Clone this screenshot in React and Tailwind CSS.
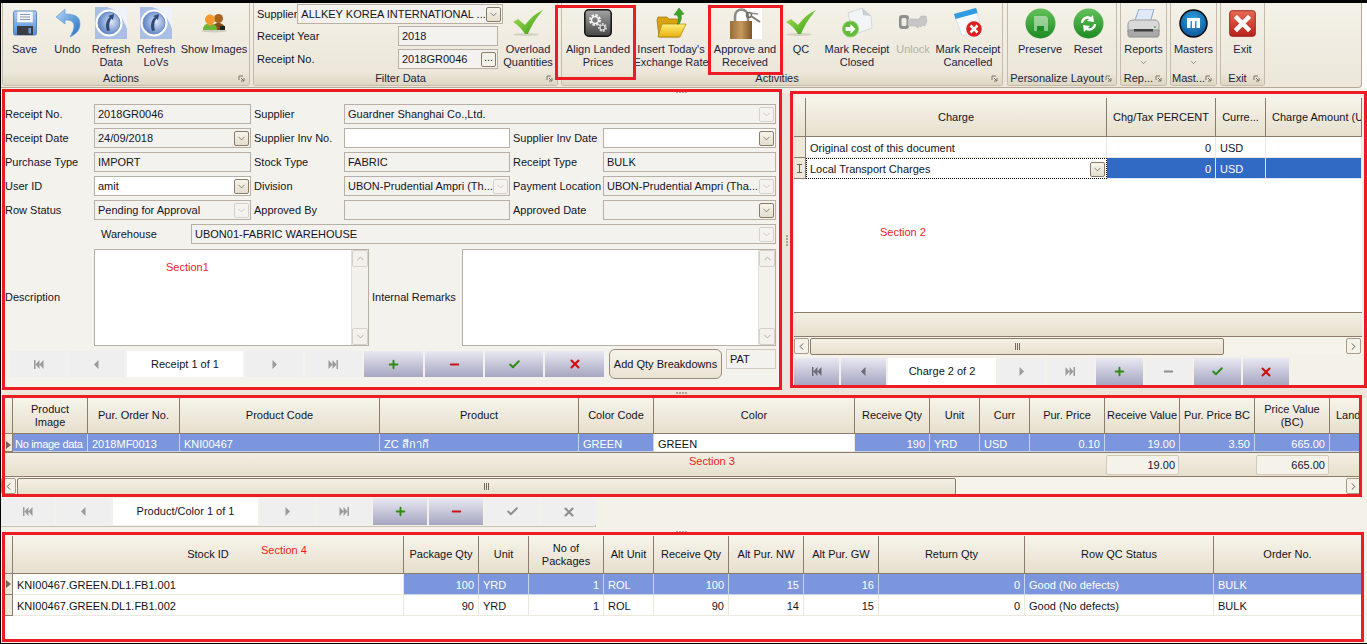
import React from 'react';
import { Plus, Minus, Check, X, ChevronDown, ChevronLeft, ChevronRight, ChevronUp } from 'lucide-react';

// ---------- ribbon icons ----------
const SaveIcon = () => (
  <svg width="26" height="26" viewBox="0 0 26 26">
    <defs>
      <linearGradient id="sv" x1="0" y1="0" x2="0" y2="1"><stop offset="0" stopColor="#a9cdf3" /><stop offset="1" stopColor="#4f8fdb" /></linearGradient>
    </defs>
    <path d="M1.5 2.5a1.5 1.5 0 0 1 1.5-1.5h20a1.5 1.5 0 0 1 1.5 1.5v21a1.5 1.5 0 0 1-1.5 1.5H3a1.5 1.5 0 0 1-1.5-1.5z" fill="url(#sv)" stroke="#5b86b8" />
    <rect x="5" y="1.5" width="16" height="11" fill="#f4f7fb" stroke="#9db6d3" strokeWidth=".5" />
    <path d="M8 4.5h10M8 7h10M8 9.5h10" stroke="#8a98a8" />
    <rect x="5" y="16" width="16" height="9" fill="#3a3d44" />
    <rect x="16.5" y="18" width="2.5" height="5.5" fill="#6c9fd8" />
  </svg>
);

const UndoIcon = () => (
  <svg width="26" height="30" viewBox="0 0 26 30">
    <defs>
      <linearGradient id="ud" x1="0" y1="0" x2="1" y2="1"><stop offset="0" stopColor="#b5d6f5" /><stop offset="1" stopColor="#1f6fc4" /></linearGradient>
    </defs>
    <path d="M10 1 1 9l9 7v-4c5 0 9 1 9 6 0 4-2 7-4 11 6-3 10-7 10-13 0-8-6-10-15-10z" fill="url(#ud)" stroke="#5f97d0" strokeWidth=".6" />
  </svg>
);

const RefreshIcon = ({ id }) => (
  <svg width="32" height="32" viewBox="0 0 32 32">
    <defs>
      <radialGradient id={id} cx=".6" cy=".45" r=".65"><stop offset="0" stopColor="#dfe8f6" /><stop offset="1" stopColor="#4f78bd" /></radialGradient>
    </defs>
    <rect width="32" height="32" fill="#a9bfe3" />
    <path d="M12 0h20v22C28 10 22 3 12 0z" fill="#eef3fb" />
    <circle cx="14" cy="16" r="13.500" fill="#fff" />
    <circle cx="14" cy="16" r="11" fill={`url(#${id})`} stroke="#6d8fcb" />
    <path d="M12 24c-2-5-1-11 3-14l-2-1 6-2-1 6-1.500-1.500c-2 2-3 7-1.500 12z" fill="#2f4a78" />
  </svg>
);

const PeopleIcon = () => (
  <svg width="28" height="20" viewBox="0 0 28 20">
    <ellipse cx="14" cy="18" rx="13" ry="1.500" fill="#d0ccc0" />
    <circle cx="18.500" cy="5.500" r="4.500" fill="#a8631f" />
    <path d="M12 17c0-5 3-7 6.500-7s6.500 2 6.500 7z" fill="#8a4c18" />
    <rect x="20" y="13" width="5" height="4" fill="#222" />
    <circle cx="10" cy="6.500" r="5" fill="#f29a2e" />
    <path d="M3 17c0-5 3-6.500 7-6.500S17 12 17 17z" fill="#6bb536" />
    <path d="M7 11c1 2 5 2 6 0l-1-2H8z" fill="#f29a2e" />
  </svg>
);

const CheckIcon = ({ id }) => (
  <svg width="32" height="28" viewBox="0 0 32 28">
    <defs>
      <linearGradient id={id} x1="0" y1="0" x2="1" y2="1"><stop offset="0" stopColor="#b4e55a" /><stop offset="1" stopColor="#2e9a12" /></linearGradient>
    </defs>
    <ellipse cx="14" cy="25.500" rx="13" ry="1.500" fill="#d5d1c5" />
    <path d="M1 13l5-3 7 6C18 9 24 4 31 1c-5 6-11 14-15 24h-3C10 20 6 16 1 13z" fill={`url(#${id})`} />
  </svg>
);

const GearsIcon = () => (
  <svg width="28" height="28" viewBox="0 0 28 28">
    <defs>
      <linearGradient id="gr" x1="0" y1="0" x2="0" y2="1"><stop offset="0" stopColor="#a4a4a4" /><stop offset="1" stopColor="#454545" /></linearGradient>
    </defs>
    <rect x=".8" y=".8" width="26.400" height="26.400" rx="4" fill="url(#gr)" stroke="#111" strokeWidth="1.500" />
    <circle cx="11" cy="11" r="4.500" fill="none" stroke="#f0f0f0" strokeWidth="3" strokeDasharray="2.200 1.300" />
    <circle cx="11" cy="11" r="3.500" fill="none" stroke="#f0f0f0" strokeWidth="1.500" />
    <circle cx="18.500" cy="18.500" r="3.200" fill="none" stroke="#d4d4d4" strokeWidth="2.500" strokeDasharray="1.800 1" />
    <circle cx="18.500" cy="18.500" r="2.500" fill="none" stroke="#d4d4d4" strokeWidth="1.200" />
  </svg>
);

const FolderIcon = () => (
  <svg width="31" height="30" viewBox="0 0 31 30">
    <defs>
      <linearGradient id="fd" x1="0" y1="0" x2="0" y2="1"><stop offset="0" stopColor="#fff07a" /><stop offset="1" stopColor="#e8b010" /></linearGradient>
    </defs>
    <path d="M1 12l1-3h9l2 2h10v18H3z" fill="#d9a20f" stroke="#9a7508" strokeWidth=".7" />
    <path d="M2 29l4-13h24l-6 13z" fill="url(#fd)" stroke="#a88208" strokeWidth=".7" />
    <path d="M21 16c2-3 2-6 0-9h-3l5-7 5 6-3 1c1 3 0 6-2 9z" fill="#3fa52a" stroke="#2b7d1c" strokeWidth=".5" />
  </svg>
);

const LockIcon = () => (
  <svg width="33" height="31" viewBox="0 0 33 31">
    <rect x="8" y="0" width="25" height="31" fill="#fff" />
    <path d="M6 14V8a6.500 6.500 0 0 1 13 0v6" fill="none" stroke="#8c8c86" strokeWidth="2.500" />
    <defs>
      <linearGradient id="lk" x1="0" y1="0" x2="1" y2="0"><stop offset="0" stopColor="#9a6c36" /><stop offset=".5" stopColor="#c79a5c" /><stop offset="1" stopColor="#7c5428" /></linearGradient>
    </defs>
    <rect x="1" y="13" width="22" height="18" fill="url(#lk)" />
    <circle cx="20" cy="7" r="2.500" fill="none" stroke="#6f6a62" strokeWidth="1.500" />
    <path d="M22 8l9 6" stroke="#807a70" strokeWidth="2" />
    <path d="M21 5l8 1" stroke="#8f8a80" strokeWidth="1.500" />
  </svg>
);

const DocArrowIcon = () => (
  <svg width="31" height="30" viewBox="0 0 31 30">
    <path d="M6 5 20 0l9 8 1 12-19 7z" fill="#f2f4f6" stroke="#d4d8dc" />
    <path d="M20 0l1 7 8 1z" fill="#c9ced4" />
    <circle cx="8.500" cy="21" r="8" fill="#63bb3c" stroke="#93d36f" />
    <path d="M3.500 19h5v-3l5 5-5 5v-3h-5z" fill="#fff" />
  </svg>
);

const KeyIcon = () => (
  <svg width="30" height="22" viewBox="0 0 30 22">
    <rect x="1" y="3" width="10" height="14" rx="3" fill="#8f8f8f" />
    <rect x="3.500" y="6" width="5" height="8" rx="1.500" fill="#efece2" />
    <path d="M10 7h11l2-3h5l1 5-2 5-3-1-1 2-2-1-1 2-3-2-7 0z" fill="#c6c6c6" stroke="#b0b0b0" strokeWidth=".5" />
  </svg>
);

const CancelIcon = () => (
  <svg width="31" height="31" viewBox="0 0 31 31">
    <path d="M1 6 23 0l6 22-20 6z" fill="#f7f9fb" stroke="#d8dce0" />
    <path d="M1 6 23 0l1.500 5L2.500 11z" fill="#2f9be0" />
    <circle cx="21" cy="21" r="8.500" fill="#dd1f1f" stroke="#f0f0f0" strokeWidth="1.500" />
    <path d="M17.500 17.500l7 7m0-7-7 7" stroke="#fff" strokeWidth="2.500" />
  </svg>
);

const GreenDisc = ({ id, children }) => (
  <svg width="31" height="31" viewBox="0 0 31 31">
    <defs>
      <linearGradient id={id} x1="0" y1="0" x2="0" y2="1"><stop offset="0" stopColor="#62c25a" /><stop offset="1" stopColor="#1e8a22" /></linearGradient>
    </defs>
    <circle cx="15.500" cy="15.500" r="15" fill={`url(#${id})`} />
    {children}
  </svg>
);

const PrinterIcon = () => (
  <svg width="33" height="29" viewBox="0 0 33 29">
    <path d="M12 0h15l-4 14H7z" fill="#dfe9f7" stroke="#8da6c8" />
    <path d="M1 15c0-2 2-4 5-4h22c2 0 4 2 4 4v8H1z" fill="#d9d9d9" stroke="#9a9a9a" />
    <path d="M1 21h31v5c0 1-1 2-2 2H3c-1 0-2-1-2-2z" fill="#a9a9a9" stroke="#8b8b8b" />
    <rect x="7" y="20" width="19" height="2.500" fill="#3f3f3f" />
    <circle cx="28" cy="18" r="1" fill="#4caf50" />
  </svg>
);

const MastersIcon = () => (
  <svg width="29" height="29" viewBox="0 0 29 29">
    <defs>
      <radialGradient id="ms" cx=".5" cy=".35" r=".7"><stop offset="0" stopColor="#35a4e0" /><stop offset="1" stopColor="#084f90" /></radialGradient>
    </defs>
    <circle cx="14.500" cy="14.500" r="13.500" fill="url(#ms)" stroke="#0a0a0a" strokeWidth="1.500" />
    <path d="M8 9h13v10h-3.500v-7H16v7h-3v-7h-1.500v7H8z" fill="#fff" />
  </svg>
);

const ExitIcon = () => (
  <svg width="27" height="27" viewBox="0 0 27 27">
    <defs>
      <linearGradient id="ex" x1="0" y1="0" x2="0" y2="1"><stop offset="0" stopColor="#e86a52" /><stop offset="1" stopColor="#b8201a" /></linearGradient>
    </defs>
    <rect x=".7" y=".7" width="25.600" height="25.600" rx="2.500" fill="url(#ex)" stroke="#9a2a20" />
    <path d="M8 8l11 11m0-11L8 19" stroke="#fff" strokeWidth="4.500" strokeLinecap="square" />
  </svg>
);

// ---------- ribbon pieces ----------
const RibbonBtn = ({ icon, lines, w, muted, arrow }) => (
  <div className={`flex flex-col items-center shrink-0 ${w}`}>
    <div className="h-[40px] flex items-center justify-center">{icon}</div>
    <div className={`text-center leading-[13px] whitespace-nowrap ${muted ? 'text-[#b5b1a6]' : 'text-[#1a2340]'}`}>
      {lines.map((l) => <div key={l}>{l}</div>)}
    </div>
    {arrow && <ChevronDown size={9} strokeWidth={1.5} className="text-[#555] mt-[2px]" />}
  </div>
);

const Launcher = () => (
  <svg width="7" height="7" viewBox="0 0 7 7" className="absolute right-[4px] top-[4px]">
    <path d="M1 1h4M1 1v4M3 3l3 3M6 3v3H3" stroke="#77776f" fill="none" />
  </svg>
);

const RibbonGroup = ({ title, w, children }) => (
  <div className={`flex flex-col h-[83px] border-x border-b border-[#c6bbab] rounded-b-[3px] shrink-0 ${w}`}>
    <div className="h-[68px] flex bg-linear-to-b from-[#f4f1e8] to-[#ece7da]">{children}</div>
    <div className="relative h-[14px] pr-[10px] leading-[14px] text-center whitespace-nowrap text-[#1a2340] bg-linear-to-b from-[#eee9db] to-[#ddd6c3]">
      {title}
      <Launcher />
    </div>
  </div>
);

// ---------- form pieces ----------
const ComboArrow = ({ on }) => (
  <span className={`shrink-0 w-[15px] h-[15px] mr-[1px] rounded-[2px] border flex items-center justify-center ${on ? 'border-[#8a7a6a] bg-linear-to-b from-[#f7f4ec] to-[#e4decd] text-[#5a5148]' : 'border-[#d5d1ca] bg-[#f5f3ef] text-[#bdb9b2]'}`}>
    <ChevronDown size={11} strokeWidth={1.5} />
  </span>
);

const Field = ({ value, white, combo, on, className = '' }) => (
  <div className={`h-[20px] flex items-center border border-[#b9afa5] pl-[3px] ${white ? 'bg-white' : 'bg-[#f4f2ee]'} ${className}`}>
    <span className="flex-1 whitespace-nowrap overflow-hidden">{value}</span>
    {combo && <ComboArrow on={on} />}
  </div>
);

const Label = ({ children }) => <div className="h-[20px] leading-[20px] whitespace-nowrap">{children}</div>;

const MemoBox = ({ w }) => (
  <div className={`h-[97px] flex bg-white border border-[#b9afa5] ${w}`}>
    <div className="flex-1" />
    <div className="w-[17px] flex flex-col justify-between bg-[#f3f1ec] border-l border-[#e3dfd7]">
      <span className="h-[17px] flex items-center justify-center border border-[#d5d1ca] rounded-[2px] text-[#a8a49d]"><ChevronUp size={11} /></span>
      <span className="h-[17px] flex items-center justify-center border border-[#d5d1ca] rounded-[2px] text-[#a8a49d]"><ChevronDown size={11} /></span>
    </div>
  </div>
);

// ---------- navigator pieces ----------
const Glyph = ({ type, on }) => {
  const c = on ? '#6a6a74' : '#9a9a9a';
  return (
    <svg width="11" height="9" viewBox="0 0 11 9">
      {type === 'first' && <path d="M1 0h1.500v9H1zM6.500 0v9L2.500 4.500zM10.500 0v9l-4-4.500z" fill={c} />}
      {type === 'prev' && <path d="M7.500 0v9L3 4.500z" fill={c} />}
      {type === 'next' && <path d="M3.500 0v9L8 4.500z" fill={c} />}
      {type === 'last' && <path d="M8.500 0H10v9H8.500zM4.500 0v9l4-4.500zM.500 0v9l4-4.500z" fill={c} />}
    </svg>
  );
};

const NavBtn = ({ w, on, children }) => (
  <div className={`h-full shrink-0 flex items-center justify-center ${w} ${on ? 'bg-linear-to-b from-[#e9e9f2] to-[#a6a6c2]' : 'bg-[#efefef]'}`}>
    {children}
  </div>
);

const NavLabel = ({ w, text }) => (
  <div className={`h-full shrink-0 bg-white flex items-center justify-center whitespace-nowrap ${w}`}>{text}</div>
);

const Add = () => <Plus size={13} strokeWidth={3.5} className="text-[#2f8a10]" />;
const Del = ({ off }) => <Minus size={13} strokeWidth={3.5} className={off ? 'text-[#8e8e8e]' : 'text-[#c81414]'} />;
const Ok = ({ off }) => <Check size={13} strokeWidth={3.5} className={off ? 'text-[#8e8e8e]' : 'text-[#2f8a10]'} />;
const No = ({ off }) => <X size={14} strokeWidth={3.5} className={off ? 'text-[#8e8e8e]' : 'text-[#d01010]'} />;

// ---------- grid pieces ----------
const Head = ({ children, left }) => (
  <div className={`flex items-center leading-[13px] text-center whitespace-nowrap overflow-hidden border-r border-[#8d7b6b] ${left ? 'justify-start pl-[6px]' : 'justify-center'}`}>
    <div>{children}</div>
  </div>
);

const RowHead = ({ children }) => (
  <div className="flex items-center justify-center border-r border-b border-[#8d7b6b] bg-[#ede8da]">{children}</div>
);

const Cell = ({ children, right, sel, focus, white }) => {
  const tone = sel ? 'bg-[#7b96dc] text-white border-[#c9d3ee]' : focus ? 'bg-[#316ac5] text-white border-[#dfe6f5]' : 'bg-white border-[#ece8dc]';
  return (
    <div className={`flex items-center overflow-hidden whitespace-nowrap px-[4px] pt-[2px] border-r border-b ${white ? 'bg-white border-[#ece8dc] text-[#111]' : tone} ${right ? 'justify-end' : ''}`}>
      {children}
    </div>
  );
};

const Pointer = () => (
  <svg width="5" height="8" viewBox="0 0 5 8"><path d="M0 0v8l5-4z" fill="#7a6258" /></svg>
);

const IBeam = () => (
  <svg width="5" height="9" viewBox="0 0 5 9"><path d="M0 .5h5M0 8.500h5M2.500 .5v8" stroke="#6a6258" fill="none" /></svg>
);

const ScrollArrow = ({ right }) => (
  <span className="w-[15px] h-[16px] shrink-0 flex items-center justify-center rounded-[2px] border border-[#a89a8a] bg-[#f4f1e8] text-[#5a5148]">
    {right ? <ChevronRight size={11} /> : <ChevronLeft size={11} />}
  </span>
);

const Scrollbar = ({ thumb, className = '' }) => (
  <div className={`h-[18px] flex items-center gap-[1px] pr-[1px] bg-[#f6f3ea] ${className}`}>
    <ScrollArrow />
    <div className={`h-[17px] shrink-0 flex items-center justify-center rounded-[2px] border border-[#8d7b6b] bg-linear-to-b from-[#f4f0e5] to-[#e7e0ce] ${thumb}`}>
      <span className="w-[5px] h-[7px] border-x border-[#77695c] relative">
        <span className="absolute left-[1px] top-0 w-[1px] h-[7px] bg-[#77695c]" />
      </span>
    </div>
    <div className="flex-1" />
    <ScrollArrow right />
  </div>
);

const Dots = () => (
  <div className="flex gap-[1px]">
    <span className="w-[2px] h-[2px] bg-[#a9a295]" />
    <span className="w-[2px] h-[2px] bg-[#a9a295]" />
    <span className="w-[2px] h-[2px] bg-[#a9a295]" />
    <span className="w-[2px] h-[2px] bg-[#a9a295]" />
  </div>
);

const headBg = 'bg-linear-to-b from-[#f7f4eb] to-[#e6dfcd] border-b border-[#8d7b6b]';
const cols2 = 'grid grid-cols-[12px_301px_109px_50px_96px]';
const cols3 = 'grid grid-cols-[9px_75px_92px_200px_199px_75px_201px_75px_50px_50px_75px_75px_75px_75px_32px]';
const cols4 = 'grid grid-cols-[9px_391px_75px_50px_75px_50px_75px_75px_75px_146px_189px_148px]';

const stockRows = [
  { id: 'KNI00467.GREEN.DL1.FB1.001', pkg: 100, pk: 1, rec: 100, nw: 15, gw: 16, sel: true },
  { id: 'KNI00467.GREEN.DL1.FB1.002', pkg: 90, pk: 1, rec: 90, nw: 14, gw: 15, sel: false },
];

export default function App() {
  return (
    <div
      className="relative w-[1367px] h-[644px] overflow-hidden flex flex-col bg-[#f4f1e9] border-l border-b border-black text-[11px] text-[#14141e]"
      style={{ fontFamily: '"Liberation Sans", "Noto Sans", sans-serif' }}
    >
      <div className="h-[3px] shrink-0 bg-black -ml-px" />

      {/* Ribbon */}
      <div className="h-[85px] shrink-0 bg-white">
        <div className="w-[1361px] h-[85px] flex items-start pl-[1px] border-r border-b border-[#b5aa9a] rounded-br-[4px] bg-linear-to-b from-[#f4f1e8] to-[#ece7da]">
          <RibbonGroup title="Actions" w="w-[248px]">
            <RibbonBtn w="w-[43px]" icon={<SaveIcon />} lines={['Save']} />
            <RibbonBtn w="w-[43px]" icon={<UndoIcon />} lines={['Undo']} />
            <RibbonBtn w="w-[44px]" icon={<RefreshIcon id="r1" />} lines={['Refresh', 'Data']} />
            <RibbonBtn w="w-[46px]" icon={<RefreshIcon id="r2" />} lines={['Refresh', 'LoVs']} />
            <RibbonBtn w="w-[70px]" icon={<PeopleIcon />} lines={['Show Images']} />
          </RibbonGroup>
          <div className="w-[3px]" />
          <RibbonGroup title="Filter Data" w="w-[305px]">
            <div className="w-[244px] shrink-0 pl-[3px] pt-[1px] flex flex-col">
              <div className="flex items-center h-[20px] mb-[1px]">
                <span className="w-[41px]">Supplier</span>
                <Field value="ALLKEY KOREA INTERNATIONAL ..." combo on className="flex-1" />
              </div>
              <div className="flex items-center h-[22px] mb-[1px]">
                <span className="w-[141px]">Receipt Year</span>
                <Field value="2018" className="flex-1" />
              </div>
              <div className="flex items-center h-[22px]">
                <span className="w-[141px]">Receipt No.</span>
                <div className="flex-1 h-[20px] flex items-center border border-[#b9afa5] pl-[3px] bg-[#f4f2ee]">
                  <span className="flex-1">2018GR0046</span>
                  <span className="w-[15px] h-[15px] mr-[1px] rounded-[2px] border border-[#8a7a6a] bg-[#f4f1e8] leading-[9px] text-center">...</span>
                </div>
              </div>
            </div>
            <RibbonBtn w="w-[60px]" icon={<CheckIcon id="c1" />} lines={['Overload', 'Quantities']} />
          </RibbonGroup>
          <div className="w-[3px]" />
          <RibbonGroup title="Activities" w="w-[442px]">
            <RibbonBtn w="w-[72px]" icon={<GearsIcon />} lines={['Align Landed', 'Prices']} />
            <RibbonBtn w="w-[74px]" icon={<FolderIcon />} lines={["Insert Today's", 'Exchange Rate']} />
            <RibbonBtn w="w-[74px]" icon={<LockIcon />} lines={['Approve and', 'Received']} />
            <RibbonBtn w="w-[38px]" icon={<CheckIcon id="c2" />} lines={['QC']} />
            <RibbonBtn w="w-[74px]" icon={<DocArrowIcon />} lines={['Mark Receipt', 'Closed']} />
            <RibbonBtn w="w-[38px]" icon={<KeyIcon />} lines={['Unlock']} muted />
            <RibbonBtn w="w-[72px]" icon={<CancelIcon />} lines={['Mark Receipt', 'Cancelled']} />
          </RibbonGroup>
          <div className="w-[4px]" />
          <RibbonGroup title="Personalize Layout" w="w-[110px]">
            <div className="w-[8px] shrink-0" />
            <RibbonBtn
              w="w-[48px]"
              lines={['Preserve']}
              icon={
                <GreenDisc id="g1">
                  <path d="M9 8h12l2 2v13H9z" fill="#fff" opacity=".45" />
                  <rect x="12" y="18" width="7" height="5" fill="#1e8a22" />
                </GreenDisc>
              }
            />
            <RibbonBtn
              w="w-[48px]"
              lines={['Reset']}
              icon={
                <GreenDisc id="g2">
                  <path d="M8 15c0-5 5-8 10-6l2-2 1 7-7-1 2-2c-3-1-5 1-6 4zM23 16c0 5-5 8-10 6l-2 2-1-7 7 1-2 2c3 1 5-1 6-4z" fill="#fff" />
                </GreenDisc>
              }
            />
          </RibbonGroup>
          <div className="w-[3px]" />
          <RibbonGroup title="Rep..." w="w-[47px]">
            <RibbonBtn w="w-[45px]" icon={<PrinterIcon />} lines={['Reports']} arrow />
          </RibbonGroup>
          <div className="w-[3px]" />
          <RibbonGroup title="Mast..." w="w-[47px]">
            <RibbonBtn w="w-[45px]" icon={<MastersIcon />} lines={['Masters']} arrow />
          </RibbonGroup>
          <div className="w-[3px]" />
          <RibbonGroup title="Exit" w="w-[45px]">
            <RibbonBtn w="w-[43px]" icon={<ExitIcon />} lines={['Exit']} />
          </RibbonGroup>
        </div>
      </div>

      <div className="h-[5px] shrink-0 flex items-end pl-[675px]"><Dots /></div>

      {/* Section 1 and 2 */}
      <div className="h-[295px] shrink-0 flex">
        <div className="w-[781px] shrink-0 pt-[11px] pl-[4px] bg-[#f4f2ed]">
          <div className="grid grid-cols-[89px_160px_90px_169px_90px_173px] gap-y-[4px]">
            <Label>Receipt No.</Label>
            <Field value="2018GR0046" className="w-[157px]" />
            <Label>Supplier</Label>
            <Field value="Guardner Shanghai Co.,Ltd." combo className="col-span-3" />

            <Label>Receipt Date</Label>
            <Field value="24/09/2018" combo on className="w-[157px]" />
            <Label>Supplier Inv No.</Label>
            <Field white value="" className="w-[166px]" />
            <Label>Supplier Inv Date</Label>
            <Field white value="" combo on />

            <Label>Purchase Type</Label>
            <Field value="IMPORT" className="w-[157px]" />
            <Label>Stock Type</Label>
            <Field value="FABRIC" className="w-[166px]" />
            <Label>Receipt Type</Label>
            <Field value="BULK" />

            <Label>User ID</Label>
            <Field white value="amit" combo on className="w-[157px]" />
            <Label>Division</Label>
            <Field value="UBON-Prudential Ampri (Th..." combo className="w-[166px]" />
            <Label>Payment Location</Label>
            <Field value="UBON-Prudential Ampri (Tha..." combo />

            <Label>Row Status</Label>
            <Field value="Pending for Approval" combo className="w-[157px]" />
            <Label>Approved By</Label>
            <Field value="" className="w-[166px]" />
            <Label>Approved Date</Label>
            <Field value="" combo on />

            <div className="col-span-6 flex pl-[96px]">
              <div className="w-[90px]"><Label>Warehouse</Label></div>
              <Field value="UBON01-FABRIC WAREHOUSE" combo className="flex-1" />
            </div>
          </div>

          <div className="flex items-center mt-[5px]">
            <div className="w-[89px]">Description</div>
            <MemoBox w="w-[275px]" />
            <div className="w-[93px] pl-[3px]">Internal Remarks</div>
            <MemoBox w="w-[314px]" />
          </div>

          <div className="flex items-center mt-[3px] h-[30px] pl-[5px]">
            <div className="flex gap-[2px] h-[26px]">
              <NavBtn w="w-[56px]"><Glyph type="first" /></NavBtn>
              <NavBtn w="w-[57px]"><Glyph type="prev" /></NavBtn>
              <NavLabel w="w-[116px]" text="Receipt 1 of 1" />
              <NavBtn w="w-[58px]"><Glyph type="next" /></NavBtn>
              <NavBtn w="w-[57px]"><Glyph type="last" /></NavBtn>
              <NavBtn w="w-[59px]" on><Add /></NavBtn>
              <NavBtn w="w-[58px]" on><Del /></NavBtn>
              <NavBtn w="w-[58px]" on><Ok /></NavBtn>
              <NavBtn w="w-[59px]" on><No /></NavBtn>
            </div>
            <div className="ml-[5px] w-[113px] h-[30px] shrink-0 flex items-center justify-center rounded-[6px] border border-[#9a8c7c] bg-linear-to-b from-[#f7f4ec] to-[#e9e3d3] whitespace-nowrap">Add Qty Breakdowns</div>
            <div className="ml-[4px] w-[50px] h-[20px] self-start pl-[3px] leading-[18px] border border-[#cfc9c0] bg-[#f4f2ee]">PAT</div>
          </div>
        </div>

        <div className="w-[9px] shrink-0 flex items-center justify-center bg-[#ebe6d9]">
          <div className="flex flex-col gap-[1px]">
            <span className="w-[2px] h-[2px] bg-[#a9a295]" />
            <span className="w-[2px] h-[2px] bg-[#a9a295]" />
            <span className="w-[2px] h-[2px] bg-[#a9a295]" />
            <span className="w-[2px] h-[2px] bg-[#a9a295]" />
          </div>
        </div>

        <div className="w-[571px] shrink-0 pl-[3px] pt-[5px]">
          <div className="w-[568px] h-[257px] flex flex-col bg-white">
            <div className={`${cols2} h-[39px] shrink-0 ${headBg}`}>
              <Head />
              <Head>Charge</Head>
              <Head>Chg/Tax PERCENT</Head>
              <Head>Curre...</Head>
              <Head left>Charge Amount (U</Head>
            </div>
            <div className={`${cols2} h-[21px] shrink-0`}>
              <RowHead />
              <Cell>Original cost of this document</Cell>
              <Cell right>0</Cell>
              <Cell>USD</Cell>
              <Cell />
            </div>
            <div className={`${cols2} h-[21px] shrink-0`}>
              <RowHead><IBeam /></RowHead>
              <div className="flex items-center pl-[3px] pt-[1px] border border-dotted border-black bg-white">
                <span className="flex-1">Local Transport Charges</span>
                <ComboArrow on />
              </div>
              <Cell focus right>0</Cell>
              <Cell focus>USD</Cell>
              <Cell focus />
            </div>
            <div className="flex-1" />
            <div className="h-[25px] shrink-0 border-y border-[#8d7b6b] bg-linear-to-b from-[#f2eee3] to-[#e7e0ce]" />
            <Scrollbar thumb="w-[414px]" />
          </div>
          <div className="flex gap-[2px] mt-[3px] h-[28px] w-[495px] border-r border-b border-[#d4cec2]">
            <NavBtn w="w-[45px]" on><Glyph type="first" on /></NavBtn>
            <NavBtn w="w-[45px]" on><Glyph type="prev" on /></NavBtn>
            <NavLabel w="w-[108px]" text="Charge 2 of 2" />
            <NavBtn w="w-[47px]"><Glyph type="next" /></NavBtn>
            <NavBtn w="w-[47px]"><Glyph type="last" /></NavBtn>
            <NavBtn w="w-[47px]" on><Add /></NavBtn>
            <NavBtn w="w-[47px]"><Del off /></NavBtn>
            <NavBtn w="w-[47px]" on><Ok /></NavBtn>
            <NavBtn w="w-[46px]" on><No /></NavBtn>
          </div>
        </div>
      </div>

      <div className="h-[10px] shrink-0 flex items-center pl-[675px] bg-[#ebe6d9]"><Dots /></div>

      {/* Section 3 */}
      <div className="w-[1361px] h-[97px] shrink-0 pl-[3px] flex flex-col">
        <div className={`${cols3} h-[36px] shrink-0 ${headBg}`}>
          <Head />
          <Head>Product<br />Image</Head>
          <Head>Pur. Order No.</Head>
          <Head>Product Code</Head>
          <Head>Product</Head>
          <Head>Color Code</Head>
          <Head>Color</Head>
          <Head>Receive Qty</Head>
          <Head>Unit</Head>
          <Head>Curr</Head>
          <Head>Pur. Price</Head>
          <Head>Receive Value</Head>
          <Head>Pur. Price BC</Head>
          <Head>Price Value<br />(BC)</Head>
          <Head left>Land</Head>
        </div>
        <div className={`${cols3} h-[18px] shrink-0 [&>div]:pt-[4px] [&>div]:leading-[13px]`}>
          <RowHead><Pointer /></RowHead>
          <div className="flex items-center overflow-hidden whitespace-nowrap pl-[2px] border-r border-b bg-[#7b96dc] text-white border-[#c9d3ee] tracking-[-0.3px]">No image data</div>
          <Cell sel>2018MF0013</Cell>
          <Cell sel>KNI00467</Cell>
          <Cell sel>ZC สีกากี</Cell>
          <Cell sel>GREEN</Cell>
          <Cell white>GREEN</Cell>
          <Cell sel right>190</Cell>
          <Cell sel>YRD</Cell>
          <Cell sel>USD</Cell>
          <Cell sel right>0.10</Cell>
          <Cell sel right>19.00</Cell>
          <Cell sel right>3.50</Cell>
          <Cell sel right>665.00</Cell>
          <Cell sel />
        </div>
        <div className={`${cols3} h-[25px] shrink-0 items-center border-y border-[#8d7b6b] bg-linear-to-b from-[#f2eee3] to-[#e7e0ce]`}>
          <div className="col-start-12 h-[20px] mx-[1px] pr-[3px] pt-[1px] flex items-center justify-end rounded-[2px] border border-[#cfc9bb] bg-[#f5f2ea]">19.00</div>
          <div className="col-start-14 h-[20px] mx-[1px] pr-[3px] pt-[1px] flex items-center justify-end rounded-[2px] border border-[#cfc9bb] bg-[#f5f2ea]">665.00</div>
        </div>
        <Scrollbar thumb="w-[939px]" className="-ml-[3px]" />
      </div>

      {/* Navigator for section 3 */}
      <div className="flex gap-[2px] mt-[3px] h-[29px] w-[595px] shrink-0 pb-[1px] border-r border-b border-[#c8c0b4]">
        <NavBtn w="w-[53px]"><Glyph type="first" /></NavBtn>
        <NavBtn w="w-[55px]"><Glyph type="prev" /></NavBtn>
        <NavLabel w="w-[145px]" text="Product/Color 1 of 1" />
        <NavBtn w="w-[55px]"><Glyph type="next" /></NavBtn>
        <NavBtn w="w-[54px]"><Glyph type="last" /></NavBtn>
        <NavBtn w="w-[54px]" on><Add /></NavBtn>
        <NavBtn w="w-[54px]" on><Del /></NavBtn>
        <NavBtn w="w-[54px]"><Ok off /></NavBtn>
        <NavBtn w="w-[55px]"><No off /></NavBtn>
      </div>

      <div className="h-[9px] shrink-0 flex items-center pl-[675px]"><Dots /></div>

      {/* Section 4 */}
      <div className="w-[1361px] h-[104px] shrink-0 pl-[3px] flex flex-col bg-white">
        <div className={`${cols4} h-[38px] shrink-0 ${headBg}`}>
          <Head />
          <Head>Stock ID</Head>
          <Head>Package Qty</Head>
          <Head>Unit</Head>
          <Head>No of<br />Packages</Head>
          <Head>Alt Unit</Head>
          <Head>Receive Qty</Head>
          <Head>Alt Pur. NW</Head>
          <Head>Alt Pur. GW</Head>
          <Head>Return Qty</Head>
          <Head>Row QC Status</Head>
          <Head>Order No.</Head>
        </div>
        {stockRows.map((r) => (
          <div key={r.id} className={`${cols4} h-[21px] shrink-0`}>
            <RowHead>{r.sel && <Pointer />}</RowHead>
            <Cell white>{r.id}</Cell>
            <Cell sel={r.sel} right>{r.pkg}</Cell>
            <Cell sel={r.sel}>YRD</Cell>
            <Cell sel={r.sel} right>{r.pk}</Cell>
            <Cell sel={r.sel}>ROL</Cell>
            <Cell sel={r.sel} right>{r.rec}</Cell>
            <Cell sel={r.sel} right>{r.nw}</Cell>
            <Cell sel={r.sel} right>{r.gw}</Cell>
            <Cell sel={r.sel} right>0</Cell>
            <Cell sel={r.sel}>Good (No defects)</Cell>
            <Cell sel={r.sel}>BULK</Cell>
          </div>
        ))}
      </div>

      {/* Red annotations drawn on top of the screen */}
      <div className="absolute left-[554px] top-[5px] w-[81px] h-[75px] border-[3px] border-[#ed1c24]" />
      <div className="absolute left-[707px] top-[5px] w-[75px] h-[70px] border-[3px] border-[#ed1c24]" />
      <div className="absolute left-[1px] top-[89px] w-[780px] h-[301px] border-[3px] border-[#ed1c24]" />
      <div className="absolute left-[789px] top-[91px] w-[577px] h-[297px] border-[3px] border-[#ed1c24]" />
      <div className="absolute left-[1px] top-[395px] w-[1360px] h-[102px] border-[3px] border-[#ed1c24]" />
      <div className="absolute left-[1px] top-[532px] w-[1362px] h-[110px] border-[3px] border-[#ed1c24]" />
      <span className="absolute left-[165px] top-[259px] text-[#ed1c24]">Section1</span>
      <span className="absolute left-[879px] top-[224px] text-[#ed1c24]">Section 2</span>
      <span className="absolute left-[688px] top-[453px] text-[#ed1c24]">Section 3</span>
      <span className="absolute left-[260px] top-[542px] text-[#ed1c24]">Section 4</span>
    </div>
  );
}
